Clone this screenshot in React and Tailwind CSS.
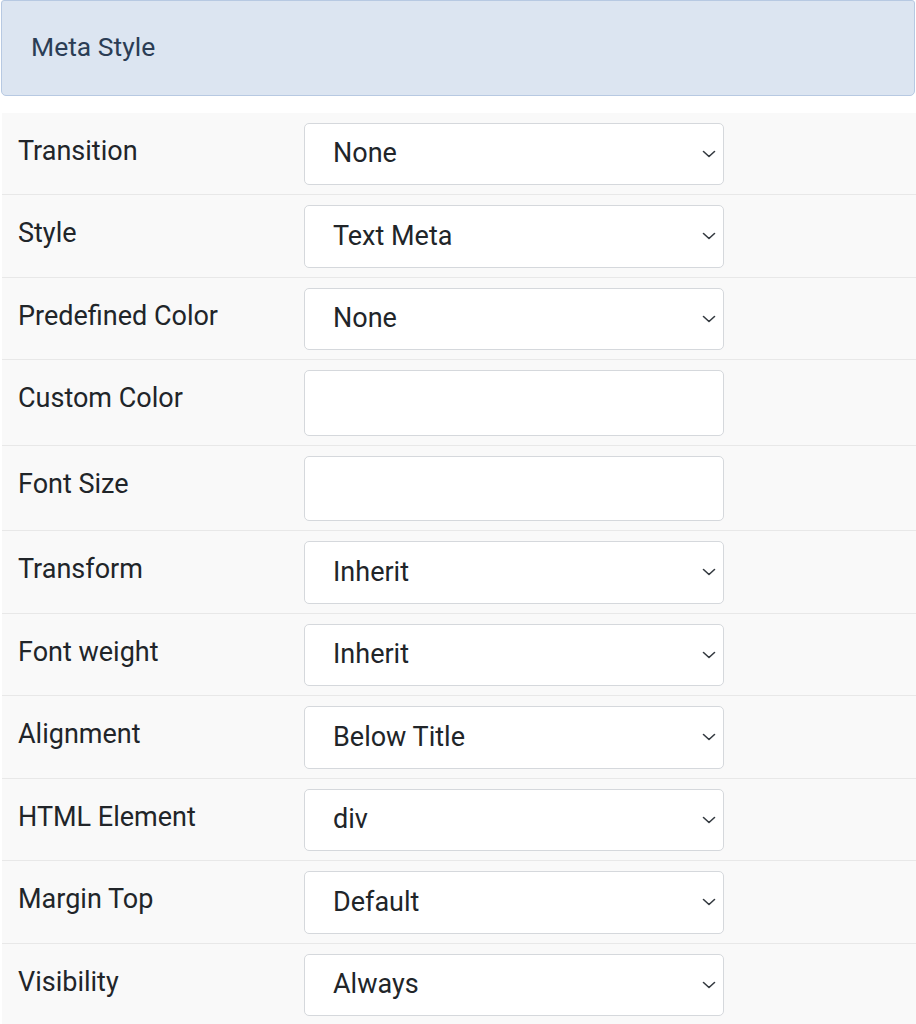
const rows = [
  { label: "Transition", value: "None" },
  { label: "Style", value: "Text Meta" },
  { label: "Predefined Color", value: "None" },
  { label: "Custom Color", input: true },
  { label: "Font Size", input: true },
  { label: "Transform", value: "Inherit" },
  { label: "Font weight", value: "Inherit" },
  { label: "Alignment", value: "Below Title" },
  { label: "HTML Element", value: "div" },
  { label: "Margin Top", value: "Default" },
  { label: "Visibility", value: "Always" },
];

function Chevron() {
  return (
    <svg width="14" height="8" viewBox="0 0 14 8" fill="none" className="absolute right-[7px] top-1/2 -translate-y-1/2">
      <path d="M1.5 1.5 L7 6.5 L12.5 1.5" stroke="#343a40" strokeWidth="1.6" strokeLinecap="round" strokeLinejoin="round" />
    </svg>
  );
}

export default function App() {
  return (
    <div className="w-[916px] min-h-screen bg-white font-['Roboto','Liberation_Sans',sans-serif] text-[#212529]">
      <div className="h-[96px] mx-[1px] flex items-center px-[29px] bg-[#dce5f1] border border-[#b7c9e2] rounded-b-[5px] rounded-t-[3px]">
        <span className="text-[26.5px] text-[#2b3d55] leading-none pb-[1px]">Meta Style</span>
      </div>

      <div className="mt-[16.5px] border-l-2 border-white">
        {rows.map((row) => (
          <div key={row.label} className="flex items-start bg-[#f9f9f9] border-b border-[#e8e8e8] pt-[10px] pb-[9px]">
            <div className="w-[302px] pl-[16px] pt-[9px] text-[27px] leading-[39px]">{row.label}</div>
            {row.input ? (
              <div className="w-[420px] h-[65.5px] bg-white border border-[#d5d8dc] rounded-[5px]"></div>
            ) : (
              <div className="relative w-[420px] h-[62.5px] bg-white border border-[#d5d8dc] rounded-[5px] flex items-center pl-[28px]">
                <span className="text-[27px] leading-none">{row.value}</span>
                <Chevron />
              </div>
            )}
          </div>
        ))}
      </div>
    </div>
  );
}
